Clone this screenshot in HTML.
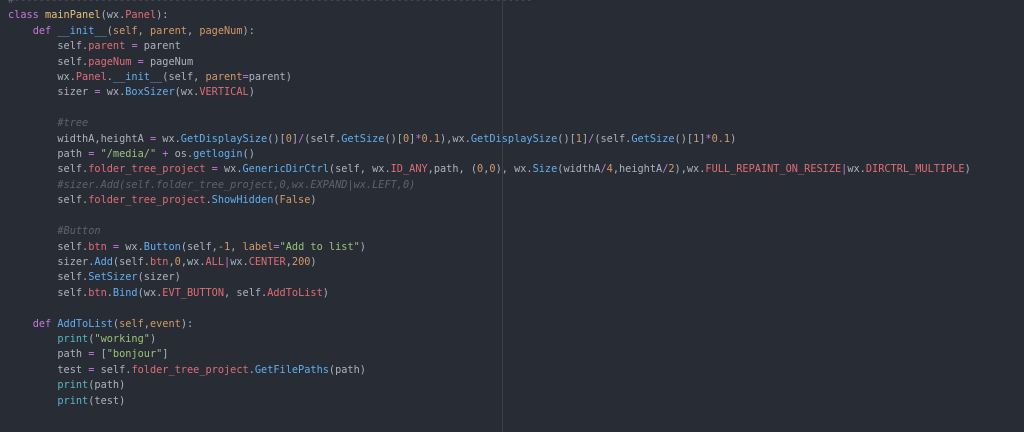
<!DOCTYPE html><html><head><style>
body{margin:0;background:#282c34;width:1024px;height:432px;overflow:hidden;position:relative}
pre{margin:0;position:absolute;left:8px;top:-7px;font-family:"DejaVu Sans Mono","Liberation Mono",monospace;font-size:10.26px;line-height:15.4px;color:#abb2bf}
.k{color:#c678dd}.f{color:#61afef}.r{color:#e06c75}.o{color:#d19a66}.s{color:#98c379}.c{color:#5c6370;font-style:italic}.y{color:#e5c07b}.cy{color:#56b6c2}
.g{position:absolute;left:502px;top:0;width:1px;height:432px;background:#3b4048}
</style></head><body><div class="g"></div><pre><span class="c">#------------------------------------------------------------------------------------</span>
<span class="k">class</span> <span class="y">mainPanel</span>(wx.<span class="r">Panel</span>):
    <span class="k">def</span> <span class="f">__init__</span>(<span class="o">self</span>, <span class="o">parent</span>, <span class="o">pageNum</span>):
        self.<span class="r">parent</span> <span class="k">=</span> parent
        self.<span class="r">pageNum</span> <span class="k">=</span> pageNum
        wx.<span class="r">Panel</span>.<span class="f">__init__</span>(self, <span class="o">parent</span><span class="k">=</span>parent)
        sizer <span class="k">=</span> wx.<span class="f">BoxSizer</span>(wx.<span class="r">VERTICAL</span>)

        <span class="c">#tree</span>
        widthA,heightA <span class="k">=</span> wx.<span class="f">GetDisplaySize</span>()[<span class="o">0</span>]<span class="k">/</span>(self.<span class="f">GetSize</span>()[<span class="o">0</span>]<span class="k">*</span><span class="o">0.1</span>),wx.<span class="f">GetDisplaySize</span>()[<span class="o">1</span>]<span class="k">/</span>(self.<span class="f">GetSize</span>()[<span class="o">1</span>]<span class="k">*</span><span class="o">0.1</span>)
        path <span class="k">=</span> <span class="s">"/media/"</span> <span class="k">+</span> os.<span class="f">getlogin</span>()
        self.<span class="r">folder_tree_project</span> <span class="k">=</span> wx.<span class="f">GenericDirCtrl</span>(self, wx.<span class="r">ID_ANY</span>,path, (<span class="o">0</span>,<span class="o">0</span>), wx.<span class="f">Size</span>(widthA<span class="k">/</span><span class="o">4</span>,heightA<span class="k">/</span><span class="o">2</span>),wx.<span class="r">FULL_REPAINT_ON_RESIZE</span><span class="k">|</span>wx.<span class="r">DIRCTRL_MULTIPLE</span>)
        <span class="c">#sizer.Add(self.folder_tree_project,0,wx.EXPAND|wx.LEFT,0)</span>
        self.<span class="r">folder_tree_project</span>.<span class="f">ShowHidden</span>(<span class="o">False</span>)

        <span class="c">#Button</span>
        self.<span class="r">btn</span> <span class="k">=</span> wx.<span class="f">Button</span>(self,<span class="o">-1</span>, <span class="o">label</span><span class="k">=</span><span class="s">"Add to list"</span>)
        sizer.<span class="f">Add</span>(self.<span class="r">btn</span>,<span class="o">0</span>,wx.<span class="r">ALL</span><span class="k">|</span>wx.<span class="r">CENTER</span>,<span class="o">200</span>)
        self.<span class="f">SetSizer</span>(sizer)
        self.<span class="r">btn</span>.<span class="f">Bind</span>(wx.<span class="r">EVT_BUTTON</span>, self.<span class="r">AddToList</span>)

    <span class="k">def</span> <span class="f">AddToList</span>(<span class="o">self</span>,<span class="o">event</span>):
        <span class="cy">print</span>(<span class="s">"working"</span>)
        path <span class="k">=</span> [<span class="s">"bonjour"</span>]
        test <span class="k">=</span> self.<span class="r">folder_tree_project</span>.<span class="f">GetFilePaths</span>(path)
        <span class="cy">print</span>(path)
        <span class="cy">print</span>(test)
</pre></body></html>
